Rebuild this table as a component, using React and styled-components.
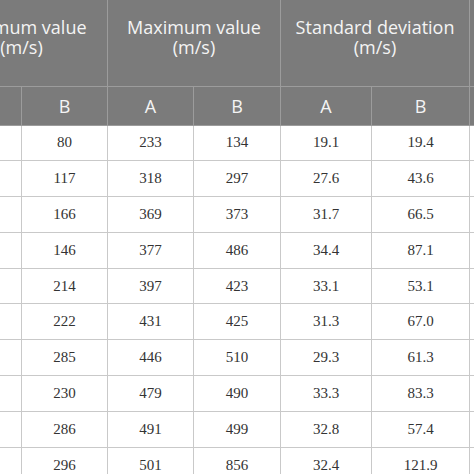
import React from 'react';
import styled, { createGlobalStyle } from 'styled-components';

const GlobalStyle = createGlobalStyle`
  html, body {
    margin: 0;
    padding: 0;
    background: #ffffff;
    overflow: hidden;
  }
`;

// widths of the visible columns (the first one is cut off on the left)
const columns = [86, 86, 86, 87, 91, 98, 120];

const rows = [
  ['80', '233', '134', '19.1', '19.4'],
  ['117', '318', '297', '27.6', '43.6'],
  ['166', '369', '373', '31.7', '66.5'],
  ['146', '377', '486', '34.4', '87.1'],
  ['214', '397', '423', '33.1', '53.1'],
  ['222', '431', '425', '31.3', '67.0'],
  ['285', '446', '510', '29.3', '61.3'],
  ['230', '479', '490', '33.3', '83.3'],
  ['286', '491', '499', '32.8', '57.4'],
  ['296', '501', '856', '32.4', '121.9'],
];

const App = () => {
  return (
    <>
      <GlobalStyle />
      <Table>
        <colgroup>
          {columns.map((w, i) => (
            <col key={i} style={{ width: w }} />
          ))}
        </colgroup>
        <thead>
          <GroupRow>
            <GroupCell colSpan={2}>Minimum value<br />(m/s)</GroupCell>
            <GroupCell colSpan={2}>Maximum value<br />(m/s)</GroupCell>
            <GroupCell colSpan={2}>Standard deviation<br />(m/s)</GroupCell>
            <GroupCell />
          </GroupRow>
          <SubRow>
            <SubCell>A</SubCell>
            <SubCell>B</SubCell>
            <SubCell>A</SubCell>
            <SubCell>B</SubCell>
            <SubCell>A</SubCell>
            <SubCell>B</SubCell>
            <SubCell />
          </SubRow>
        </thead>
        <tbody>
          {rows.map((r, i) => (
            <DataRow key={i}>
              <DataCell />
              {r.map((v, j) => (
                <DataCell key={j}>{v}</DataCell>
              ))}
              <DataCell />
            </DataRow>
          ))}
        </tbody>
      </Table>
    </>
  );
};

const Table = styled.table`
  border-collapse: collapse;
  table-layout: fixed;
  margin-left: -65px;
  width: 654px;
`;

const GroupRow = styled.tr`
  height: 86px;
  background: #7b7b7b;
`;

const GroupCell = styled.th`
  font-family: 'Open Sans', 'Noto Sans', sans-serif;
  font-weight: 400;
  font-size: 18px;
  line-height: 20px;
  color: #f4f4f4;
  text-align: center;
  vertical-align: top;
  padding: 17px 0 0;
  border-left: 1px solid #9c9c9c;
  border-right: 1px solid #9c9c9c;
  border-bottom: 1px solid #9c9c9c;
  white-space: nowrap;
`;

const SubRow = styled.tr`
  height: 39px;
  background: #7b7b7b;
`;

const SubCell = styled.th`
  font-family: 'Open Sans', 'Noto Sans', sans-serif;
  font-weight: 400;
  font-size: 18px;
  color: #f4f4f4;
  text-align: center;
  padding: 0;
  border: 1px solid #9c9c9c;
`;

const DataRow = styled.tr`
  height: 35.8px;
`;

const DataCell = styled.td`
  font-family: 'Liberation Serif', 'Times New Roman', serif;
  font-size: 15px;
  color: #333333;
  text-align: center;
  padding: 0;
  border: 1px solid #c9c9c9;
`;

export default App;
